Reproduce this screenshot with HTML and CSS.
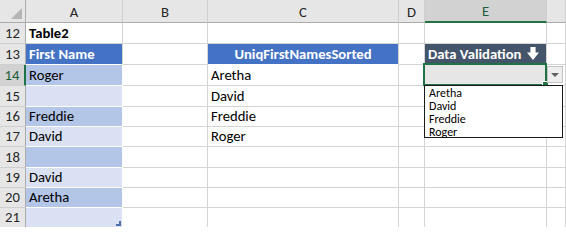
FILE: index.html
```html
<!DOCTYPE html>
<html>
<head>
<meta charset="utf-8">
<link rel="stylesheet" href="styles.css">
</head>
<body>
<div class="sheet">
  <div class="corner"><svg width="11" height="11" viewBox="0 0 11 11"><polygon points="11,0 11,11 0,11" fill="#b5b5b5"/></svg></div>
  <div class="ch">A</div>
  <div class="ch">B</div>
  <div class="ch">C</div>
  <div class="ch">D</div>
  <div class="ch sel">E</div>
  <div class="ch"></div>

  <div class="rh">12</div>
  <div class="c b">Table2</div>
  <div class="c"></div><div class="c"></div><div class="c"></div><div class="c"></div><div class="c"></div>

  <div class="rh">13</div>
  <div class="c th-blue">First Name</div>
  <div class="c"></div>
  <div class="c th-blue center">UniqFirstNamesSorted</div>
  <div class="c"></div>
  <div class="c th-dark">Data Validation<svg class="arrow" width="12" height="13" viewBox="0 0 12 13"><polygon points="3.4,0 8.6,0 8.6,5.6 12,5.6 6,13 0,5.6 3.4,5.6" fill="#ffffff"/></svg></div>
  <div class="c"></div>

  <div class="rh sel">14</div>
  <div class="c band1">Roger</div>
  <div class="c"></div>
  <div class="c">Aretha</div>
  <div class="c"></div>
  <div class="c dv"></div>
  <div class="c"></div>

  <div class="rh">15</div>
  <div class="c band2"></div>
  <div class="c"></div>
  <div class="c">David</div>
  <div class="c"></div><div class="c"></div><div class="c"></div>

  <div class="rh">16</div>
  <div class="c band1">Freddie</div>
  <div class="c"></div>
  <div class="c">Freddie</div>
  <div class="c"></div><div class="c"></div><div class="c"></div>

  <div class="rh">17</div>
  <div class="c band2">David</div>
  <div class="c"></div>
  <div class="c">Roger</div>
  <div class="c"></div><div class="c"></div><div class="c"></div>

  <div class="rh">18</div>
  <div class="c band1"></div>
  <div class="c"></div><div class="c"></div><div class="c"></div><div class="c"></div><div class="c"></div>

  <div class="rh">19</div>
  <div class="c band2">David</div>
  <div class="c"></div><div class="c"></div><div class="c"></div><div class="c"></div><div class="c"></div>

  <div class="rh">20</div>
  <div class="c band1">Aretha</div>
  <div class="c"></div><div class="c"></div><div class="c"></div><div class="c"></div><div class="c"></div>

  <div class="rh">21</div>
  <div class="c band2 last"><svg class="resize" width="5" height="5" viewBox="0 0 5 5"><polygon points="3,0 5,0 5,5 0,5 0,3 3,3" fill="#4f6fb0"/></svg></div>
  <div class="c"></div><div class="c"></div><div class="c"></div><div class="c"></div><div class="c"></div>

  <div class="selbox"><span class="handle"></span></div>
  <div class="ddbtn"><span class="tri"></span></div>
  <div class="ddlist">
    <div class="item">Aretha</div>
    <div class="item">David</div>
    <div class="item">Freddie</div>
    <div class="item">Roger</div>
  </div>
</div>
</body>
</html>
```

FILE: styles.css
```css
html, body {
  margin: 0;
  padding: 0;
  background: #ffffff;
}

.sheet {
  position: relative;
  width: 566px;
  height: 227px;
  overflow: hidden;
  display: grid;
  grid-template-columns: 26px 97px 85px 191px 26px 122px 1fr;
  grid-template-rows: 23px 21px 21px 21px 21px 20px 20px 21px 20px 20px 20px;
  font-family: Carlito, Lato, "Liberation Sans", sans-serif;
  font-size: 14.67px;
  color: #000000;
}

.sheet > div {
  box-sizing: border-box;
}

.corner {
  background: #e6e6e6;
  border-right: 1px solid #ababab;
  border-bottom: 1px solid #ababab;
  display: flex;
  justify-content: flex-end;
  align-items: flex-end;
  padding: 0 3px 3px 0;
}

.ch {
  background: #e6e6e6;
  border-right: 1px solid #cfcfcf;
  border-bottom: 1px solid #ababab;
  display: flex;
  justify-content: center;
  align-items: center;
  color: #262626;
  padding-top: 1px;
}

.ch.sel {
  background: #d2d2d2;
  border-bottom: 2px solid #217346;
  color: #1e5e3a;
}

.rh {
  background: #e6e6e6;
  border-right: 1px solid #ababab;
  border-bottom: 1px solid #cfcfcf;
  display: flex;
  justify-content: center;
  align-items: flex-end;
  padding-bottom: 1px;
  color: #262626;
}

.rh.sel {
  background: #d2d2d2;
  border-right: 2px solid #217346;
  color: #1e5e3a;
}

.c {
  border-right: 1px solid #d4d4d4;
  border-bottom: 1px solid #d4d4d4;
  display: flex;
  align-items: flex-end;
  padding: 0 3px 1px 3px;
  white-space: nowrap;
  overflow: hidden;
}

.b {
  font-weight: bold;
}

.center {
  justify-content: center;
}

.th-blue {
  background: #4472c4;
  color: #ffffff;
  font-weight: bold;
  border-bottom-color: #ffffff;
}

.th-dark {
  background: #44546a;
  color: #ffffff;
  font-weight: bold;
  align-items: center;
  padding-top: 1px;
}

.arrow {
  margin-left: 6px;
  margin-bottom: 1px;
}

.band1 {
  background: #b4c6e7;
  border-bottom-color: #ffffff;
  border-right-color: #ffffff;
}

.band2 {
  background: #d9e1f2;
  border-bottom-color: #ffffff;
  border-right-color: #ffffff;
}

.last {
  position: relative;
}

.resize {
  position: absolute;
  right: 1px;
  bottom: 1px;
}

.dv {
  background: #e7e6e6;
}

.selbox {
  position: absolute;
  left: 423px;
  top: 63px;
  width: 124px;
  height: 23px;
  border: 2px solid #217346;
  box-sizing: border-box;
}

.handle {
  position: absolute;
  right: -4px;
  bottom: -4px;
  width: 5px;
  height: 5px;
  background: #217346;
  border: 1px solid #ffffff;
}

.ddbtn {
  position: absolute;
  left: 547px;
  top: 66px;
  width: 16px;
  height: 17px;
  box-sizing: border-box;
  border: 1px solid #c3c3c3;
  background: #eeeeee;
  display: flex;
  justify-content: center;
  align-items: center;
}

.tri {
  width: 0;
  height: 0;
  border-left: 4px solid transparent;
  border-right: 4px solid transparent;
  border-top: 4px solid #606060;
}

.ddlist {
  position: absolute;
  left: 424px;
  top: 85px;
  width: 139px;
  height: 53px;
  box-sizing: border-box;
  border: 1px solid #1a1a1a;
  background: #ffffff;
  padding: 1px 0 0 4px;
  font-size: 12px;
}

.item {
  height: 13px;
  line-height: 13px;
  color: #000000;
}
```
